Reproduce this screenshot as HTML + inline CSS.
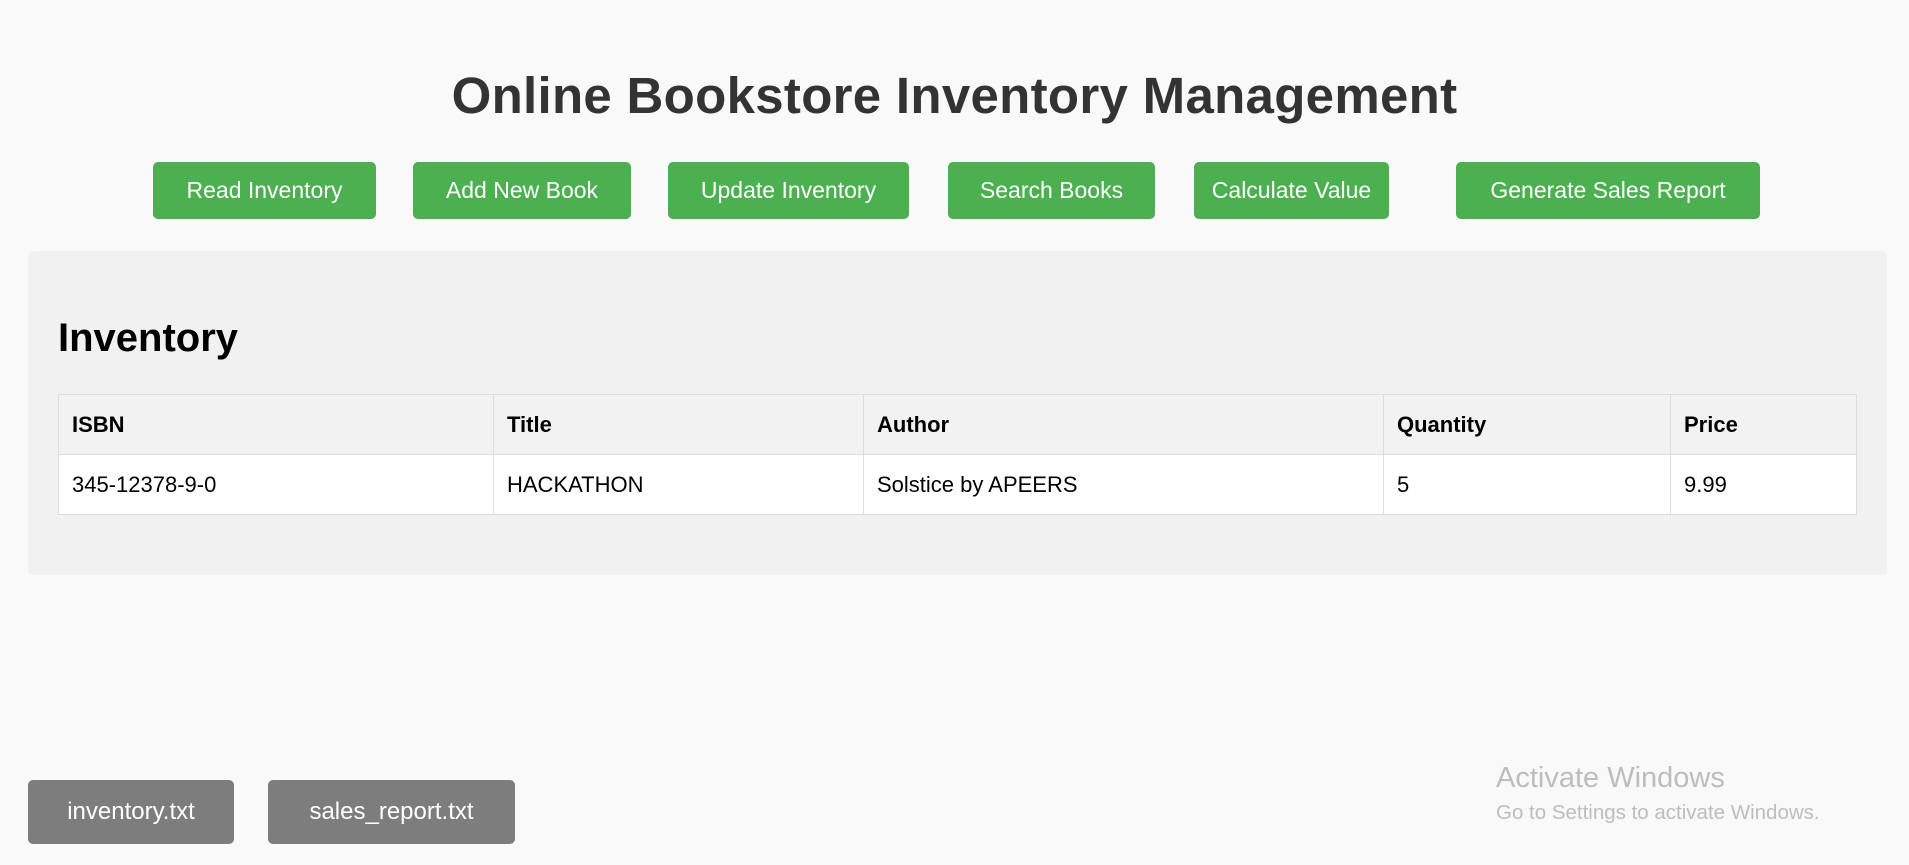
<!DOCTYPE html>
<html><head><meta charset="utf-8"><style>
*{margin:0;padding:0;box-sizing:border-box}
body{width:1909px;height:865px;background:#f9f9f9;font-family:"Liberation Sans",sans-serif;position:relative;overflow:hidden}
h1{position:absolute;top:66px;left:0;width:1909px;text-align:center;font-size:51px;font-weight:bold;color:#333;letter-spacing:0.3px}
.btn{position:absolute;top:162px;height:57px;background:#4caf50;color:#fff;border-radius:5px;font-size:23px;display:flex;align-items:center;justify-content:center}
.panel{position:absolute;left:28px;top:251px;width:1859px;height:324px;background:#f1f1f1;border-radius:5px}
h2{position:absolute;left:58px;top:316px;font-size:40px;font-weight:bold;color:#000}
table{position:absolute;left:58px;top:394px;width:1799px;border-collapse:collapse;font-size:22px}
td,th{border:1px solid #ddd;height:60px;padding:0 13px;text-align:left;color:#000}
th{background:#f2f2f2;font-weight:bold}
td{background:#fff}
.f{position:absolute;top:780px;height:64px;background:#7d7d7d;color:#fff;border-radius:5px;font-size:24px;display:flex;align-items:center;justify-content:center}
.w1{position:absolute;left:1496px;top:762px;font-size:29px;color:#bdbdbd}
.w2{position:absolute;left:1496px;top:801px;font-size:20.5px;color:#bdbdbd}
</style></head><body>
<h1>Online Bookstore Inventory Management</h1>
<div class="btn" style="left:153px;width:223px">Read Inventory</div>
<div class="btn" style="left:413px;width:218px">Add New Book</div>
<div class="btn" style="left:668px;width:241px">Update Inventory</div>
<div class="btn" style="left:948px;width:207px">Search Books</div>
<div class="btn" style="left:1194px;width:195px">Calculate Value</div>
<div class="btn" style="left:1456px;width:304px">Generate Sales Report</div>
<div class="panel"></div>
<h2>Inventory</h2>
<table>
<colgroup><col style="width:435px"><col style="width:370px"><col style="width:520px"><col style="width:287px"><col></colgroup>
<tr><th>ISBN</th><th>Title</th><th>Author</th><th>Quantity</th><th>Price</th></tr>
<tr><td>345-12378-9-0</td><td>HACKATHON</td><td>Solstice by APEERS</td><td>5</td><td>9.99</td></tr>
</table>
<div class="f" style="left:28px;width:206px">inventory.txt</div>
<div class="f" style="left:268px;width:247px">sales_report.txt</div>
<div class="w1">Activate Windows</div>
<div class="w2">Go to Settings to activate Windows.</div>
</body></html>
